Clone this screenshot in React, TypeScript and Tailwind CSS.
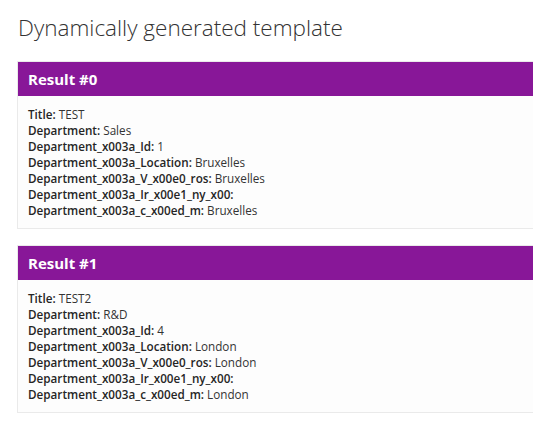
import React from "react";

type Row = [string, string];

const results: Row[][] = [
  [
    ["Title", "TEST"],
    ["Department", "Sales"],
    ["Department_x003a_Id", "1"],
    ["Department_x003a_Location", "Bruxelles"],
    ["Department_x003a_V_x00e0_ros", "Bruxelles"],
    ["Department_x003a_Ir_x00e1_ny_x00", ""],
    ["Department_x003a_c_x00ed_m", "Bruxelles"],
  ],
  [
    ["Title", "TEST2"],
    ["Department", "R&D"],
    ["Department_x003a_Id", "4"],
    ["Department_x003a_Location", "London"],
    ["Department_x003a_V_x00e0_ros", "London"],
    ["Department_x003a_Ir_x00e1_ny_x00", ""],
    ["Department_x003a_c_x00ed_m", "London"],
  ],
];

export default function App() {
  return (
    <div
      className="w-[533px] h-[436px] overflow-hidden bg-white text-[#333333]"
      style={{ fontFamily: '"Open Sans", "Noto Sans", sans-serif' }}
    >
      <h1 className="pl-[18px] pt-[12px] text-[22.5px] leading-[32px] font-light text-[#333333]">
        Dynamically generated template
      </h1>
      <div className="pl-[17px] pt-[17px] flex flex-col gap-[16px]">
        {results.map((rows, i) => (
          <div
            key={i}
            className="w-[540px] border border-[#eaeaea] bg-[#fdfdfd]"
          >
            <div className="h-[34px] bg-[#881798] flex items-center pl-[10px]">
              <span className="text-white font-bold text-[15px]">
                Result #{i}
              </span>
            </div>
            <div className="px-[10px] pt-[10px] pb-[10px] text-[11.7px] leading-[16px]">
              {rows.map(([k, v]) => (
                <div key={k} className="whitespace-nowrap">
                  <span className="font-semibold text-[#252525]">{k}:</span>
                  {v ? <span> {v}</span> : null}
                </div>
              ))}
            </div>
          </div>
        ))}
      </div>
    </div>
  );
}
